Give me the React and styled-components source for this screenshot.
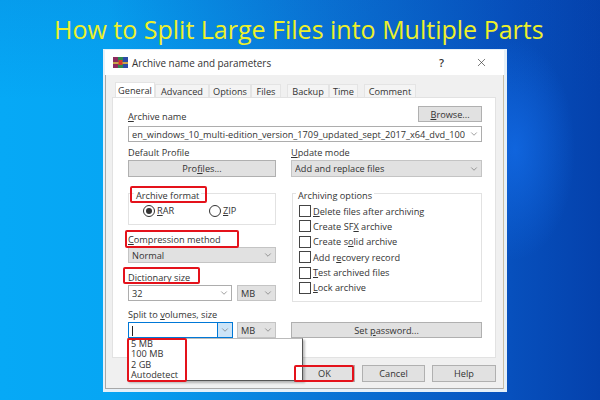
import React from "react";
import styled, { createGlobalStyle } from "styled-components";
import { ChevronDown, X } from "lucide-react";

const Global = createGlobalStyle`
  html, body {
    margin: 0;
    padding: 0;
    width: 600px;
    height: 400px;
    overflow: hidden;
  }
`;

const Desktop = styled.div`
  position: relative;
  width: 600px;
  height: 400px;
  overflow: hidden;
  display: flex;
  flex-direction: column;
  align-items: flex-start;
  font-family: "Open Sans", sans-serif;
  background:
    radial-gradient(ellipse 60px 110px at 515px 150px, rgba(20, 110, 235, 0.7) 0%, rgba(20, 110, 235, 0) 100%),
    linear-gradient(180deg, rgba(8, 70, 170, 0.12) 0%, rgba(8, 70, 170, 0) 25%),
    linear-gradient(90deg, #06a9f6 0%, #06a6f4 18%, #0a78d8 52%, #0750bd 85%, #0441ac 100%);
`;

const Headline = styled.h1`
  box-sizing: border-box;
  margin: 0 0 0 54px;
  padding-top: 16px;
  height: 49px;
  font-size: 25px;
  line-height: 26px;
  font-weight: 400;
  color: #edf02a;
  white-space: nowrap;
`;

const Dialog = styled.div`
  position: relative;
  box-sizing: border-box;
  width: 404px;
  height: 343px;
  margin-left: 103px;
  background: #f0f0f0;
  border-style: solid;
  border-color: #e6f0f8;
  border-width: 1px 3px 3px 2px;
  box-shadow: inset 1px 0 0 #a8a8a8, inset -1px 0 0 #c8bfa8, inset 0 -1px 0 #a8a8a8;
  display: flex;
  flex-direction: column;
  font-size: 9.2px;
  color: #333;
`;

const TitleBar = styled.div`
  height: 25px;
  flex-shrink: 0;
  background: #fff;
  display: flex;
  align-items: center;
  padding: 0 16px 0 8px;
  font-size: 9.9px;
`;

const TitleText = styled.span`
  margin-left: 4px;
  flex: 1;
`;

const Help = styled.span`
  font-size: 11px;
  font-weight: 600;
  margin-right: 31px;
`;

const TabStrip = styled.div`
  display: flex;
  align-items: flex-end;
  flex-shrink: 0;
  height: 22px;
  padding-left: 10px;
`;

const Tab = styled.div`
  box-sizing: border-box;
  width: ${p => p.$w}px;
  height: ${p => (p.$active ? 15 : 13)}px;
  margin-left: ${p => p.$ml || 0}px;
  display: flex;
  align-items: center;
  justify-content: center;
  background: ${p => (p.$active ? "#fff" : "#f4f4f4")};
  border: 1px solid #e4e4e4;
  border-bottom: none;
`;

const Panel = styled.div`
  box-sizing: border-box;
  flex-shrink: 0;
  width: 384px;
  height: 261px;
  margin-left: 7px;
  background: #fff;
  border: 1px solid #e2e2e2;
  padding: 8px 13px 0 15px;
  display: grid;
  grid-template-columns: 148px 191px;
  column-gap: 15px;
  align-content: start;
`;

const WideField = styled.div`
  grid-column: 1 / 3;
  display: flex;
  flex-direction: column;
  gap: 4px;
`;

const TopRow = styled.div`
  display: flex;
  justify-content: space-between;
  align-items: center;
  height: 16px;
`;

const Label = styled.div`
  height: ${p => p.$h || 14}px;
  line-height: ${p => p.$h || 14}px;
  margin-top: ${p => p.$mt || 0}px;
  white-space: nowrap;
`;

const Button = styled.div`
  box-sizing: border-box;
  flex-shrink: 0;
  height: ${p => p.$h || 16}px;
  width: ${p => (p.$w ? `${p.$w}px` : "100%")};
  margin-top: ${p => p.$mt || 0}px;
  background: #e1e1e1;
  border: 1px solid #b0b0b0;
  display: flex;
  align-items: center;
  justify-content: center;
`;

const Select = styled.div`
  box-sizing: border-box;
  height: ${p => p.$h || 16}px;
  width: ${p => (p.$w ? `${p.$w}px` : "100%")};
  flex-shrink: 0;
  background: ${p => (p.$gray ? "#e1e1e1" : "#fff")};
  border: 1px solid ${p => (p.$focus ? "#0078d7" : p.$gray ? "#c4c4c4" : "#adadad")};
  display: flex;
  align-items: center;
  padding-left: 3px;
  overflow: hidden;
  white-space: nowrap;
`;

const SelectText = styled.span`
  flex: 1;
  margin-right: 2px;
  overflow: hidden;
`;

const Arrow = styled.span`
  width: 14px;
  height: 100%;
  flex-shrink: 0;
  display: flex;
  align-items: center;
  justify-content: center;
  background: ${p => (p.$focus ? "#cce4f7" : "transparent")};
  border-left: ${p => (p.$focus ? "1px solid #0078d7" : "none")};
  color: #666;
`;

const Column = styled.div`
  display: flex;
  flex-direction: column;
`;

const Group = styled.div`
  position: relative;
  box-sizing: border-box;
  height: ${p => p.$h}px;
  margin-top: 16px;
  margin-left: ${p => p.$ml || 0}px;
  border: 1px solid #e2e2e2;
`;

const GroupTitle = styled.span`
  position: absolute;
  top: -5px;
  left: ${p => p.$left}px;
  padding: 0 2px;
  line-height: 13px;
  background: #fff;
`;

const RadioRow = styled.div`
  display: flex;
  padding: 10px 0 0 14px;
`;

const RadioItem = styled.label`
  display: flex;
  align-items: center;
  gap: 2px;
  width: 82px;
`;

const RadioMark = styled.span`
  box-sizing: border-box;
  width: 12px;
  height: 12px;
  border-radius: 50%;
  border: 1px solid #333;
  display: flex;
  align-items: center;
  justify-content: center;
  &::after {
    content: "";
    width: 6px;
    height: 6px;
    border-radius: 50%;
    background: ${p => (p.$on ? "#333" : "transparent")};
  }
`;

const CheckList = styled.div`
  display: flex;
  flex-direction: column;
  gap: 3.4px;
  padding: 11px 0 0 6px;
`;

const CheckRow = styled.div`
  display: flex;
  align-items: center;
  gap: 2px;
  height: 12px;
  white-space: nowrap;
`;

const CheckBox = styled.span`
  box-sizing: border-box;
  width: 12px;
  height: 12px;
  background: #fff;
  border: 1px solid #444;
`;

const Row = styled.div`
  display: flex;
  gap: ${p => p.$gap}px;
`;

const Caret = styled.span`
  display: inline-block;
  width: 1px;
  height: 10px;
  vertical-align: middle;
  background: #222;
`;

const Footer = styled.div`
  flex: 1;
  display: flex;
  justify-content: flex-end;
  align-items: flex-start;
  gap: 7px;
  padding: 7px 8px 0 0;
`;

const DropList = styled.div`
  position: absolute;
  left: 22px;
  top: 288px;
  box-sizing: border-box;
  width: 176px;
  height: 43px;
  padding-left: 3px;
  background: #fff;
  border: 1px solid #555;
  border-top-color: #bbb;
  border-left-color: #ccc;
  box-shadow: 2px 2px 2px rgba(0, 0, 0, 0.25);
  line-height: 10.4px;
  z-index: 1;
`;

const Mark = styled.div`
  position: absolute;
  box-sizing: border-box;
  left: ${p => p.$x - 105}px;
  top: ${p => p.$y - 50}px;
  width: ${p => p.$w}px;
  height: ${p => p.$h}px;
  border: 2px solid #e4121b;
  border-radius: 2px;
  z-index: 2;
`;

const U = styled.span`
  text-decoration: underline;
  text-underline-offset: 1px;
  text-decoration-thickness: 1px;
`;

const AppIcon = () => (
  <svg width="15" height="11" viewBox="0 0 15 11">
    <rect x="0" y="0" width="5" height="11" fill="#8c2a5e" />
    <rect x="5" y="0" width="5" height="11" fill="#2f8a4e" />
    <rect x="10" y="0" width="5" height="11" fill="#2c4aa6" />
    <rect x="0" y="5" width="15" height="2" fill="#c9a34a" />
    <rect x="5.5" y="3" width="4" height="5" fill="#d8342c" />
  </svg>
);

const DownIcon = () => <ChevronDown size={10} strokeWidth={1.5} />;

const tabs = [
  { name: "General", w: 40, active: true },
  { name: "Advanced", w: 54 },
  { name: "Options", w: 42 },
  { name: "Files", w: 30 },
  { name: "Backup", w: 42, ml: 6 },
  { name: "Time", w: 29 },
  { name: "Comment", w: 52, ml: 6 },
];

const checks = [
  <><U>D</U>elete files after archiving</>,
  <>Create SF<U>X</U> archive</>,
  <>Create s<U>o</U>lid archive</>,
  <>Add r<U>e</U>covery record</>,
  <><U>T</U>est archived files</>,
  <><U>L</U>ock archive</>,
];

export default function App() {
  return (
    <Desktop>
      <Global />
      <Headline>How to Split Large Files into Multiple Parts</Headline>
      <Dialog>
        <TitleBar>
          <AppIcon />
          <TitleText>Archive name and parameters</TitleText>
          <Help>?</Help>
          <X size={13} strokeWidth={1.2} />
        </TitleBar>
        <TabStrip>
          {tabs.map(t => (
            <Tab key={t.name} $w={t.w} $ml={t.ml} $active={t.active}>{t.name}</Tab>
          ))}
        </TabStrip>
        <Panel>
          <WideField>
            <TopRow>
              <Label $mt={6}><U>A</U>rchive name</Label>
              <Button $w={64}><span><U>B</U>rowse...</span></Button>
            </TopRow>
            <Select>
              <SelectText>en_windows_10_multi-edition_version_1709_updated_sept_2017_x64_dvd_100</SelectText>
              <Arrow><DownIcon /></Arrow>
            </Select>
          </WideField>
          <Column>
            <Label $mt={4}>Default Profile</Label>
            <Button $h={17}><span>Pro<U>f</U>iles...</span></Button>
            <Group $h={32}>
              <GroupTitle $left={5}>Archive format</GroupTitle>
              <RadioRow>
                <RadioItem><RadioMark $on /><span><U>R</U>AR</span></RadioItem>
                <RadioItem><RadioMark /><span><U>Z</U>IP</span></RadioItem>
              </RadioRow>
            </Group>
            <Label $mt={8}><U>C</U>ompression method</Label>
            <Select $gray>
              <SelectText>Normal</SelectText>
              <Arrow><DownIcon /></Arrow>
            </Select>
            <Label $mt={7} $h={15}><U>D</U>ictionary size</Label>
            <Row $gap={5}>
              <Select $w={104}>
                <SelectText>32</SelectText>
                <Arrow><DownIcon /></Arrow>
              </Select>
              <Select $gray $w={39}>
                <SelectText>MB</SelectText>
                <Arrow><DownIcon /></Arrow>
              </Select>
            </Row>
            <Label $mt={6} $h={15}>Split to <U>v</U>olumes, size</Label>
            <Row $gap={4}>
              <Select $w={105} $focus>
                <SelectText><Caret /></SelectText>
                <Arrow $focus><DownIcon /></Arrow>
              </Select>
              <Select $gray $w={39}>
                <SelectText>MB</SelectText>
                <Arrow><DownIcon /></Arrow>
              </Select>
            </Row>
          </Column>
          <Column>
            <Label $mt={4}><U>U</U>pdate mode</Label>
            <Select $gray $h={17}>
              <SelectText>Add and replace files</SelectText>
              <Arrow><DownIcon /></Arrow>
            </Select>
            <Group $h={109} $ml={1}>
              <GroupTitle $left={3}>Archiving options</GroupTitle>
              <CheckList>
                {checks.map((c, i) => (
                  <CheckRow key={i}><CheckBox /><span>{c}</span></CheckRow>
                ))}
              </CheckList>
            </Group>
            <Button $mt={20}><span>Set <U>p</U>assword...</span></Button>
          </Column>
        </Panel>
        <Footer>
          <Button $w={61} $h={17}>OK</Button>
          <Button $w={63} $h={17}>Cancel</Button>
          <Button $w={64} $h={17}>Help</Button>
        </Footer>
        <DropList>
          <div>5 MB</div>
          <div>100 MB</div>
          <div>2 GB</div>
          <div>Autodetect</div>
        </DropList>
        <Mark $x={130} $y={186} $w={77} $h={17} />
        <Mark $x={125} $y={230} $w={114} $h={18} />
        <Mark $x={123} $y={267} $w={77} $h={17} />
        <Mark $x={127} $y={338} $w={60} $h={44} />
        <Mark $x={294} $y={365} $w={60} $h={17} />
      </Dialog>
    </Desktop>
  );
}
